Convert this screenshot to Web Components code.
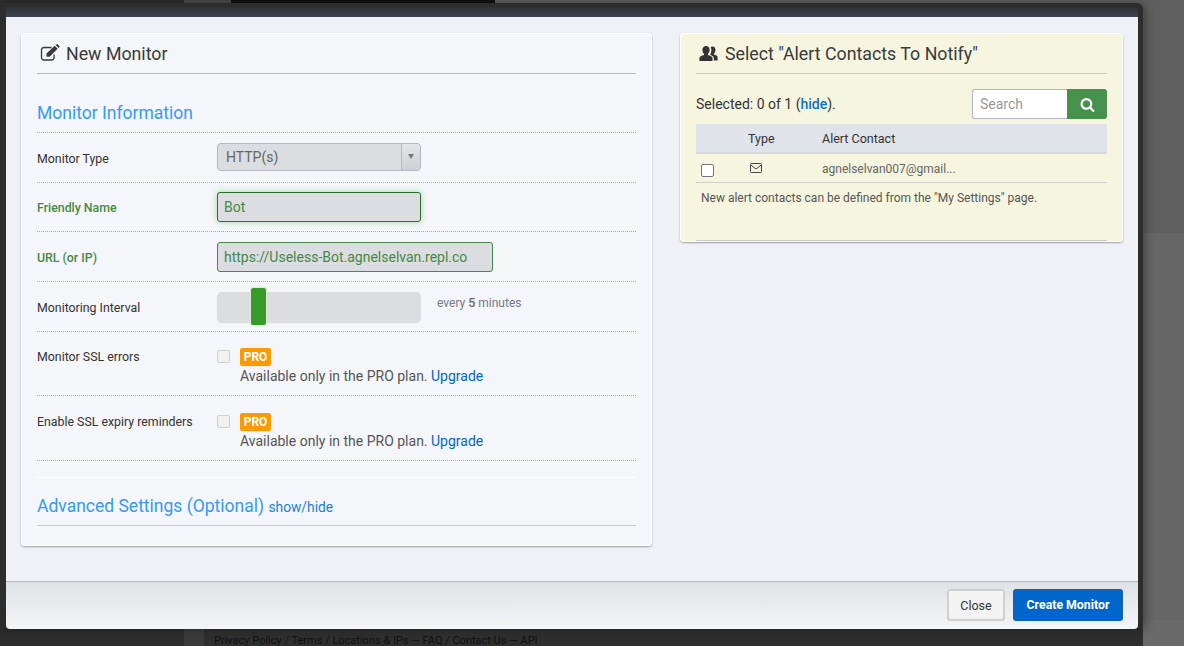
<!DOCTYPE html>
<html>
<head>
<meta charset="utf-8">
<title>New Monitor</title>
<style>
  html, body { margin: 0; height: 100%; overflow: hidden; }
  body { font-family: Roboto, "Liberation Sans", sans-serif; background: #2c2c2c; }
</style>
</head>
<body>
<up-page>
  <up-modal>
    <up-card slot="left" heading="New Monitor" icon="edit">
      <up-section-title>Monitor Information</up-section-title>
      <up-row label="Monitor Type" height="49"><up-select value="HTTP(s)"></up-select></up-row>
      <up-row label="Friendly Name" valid height="48"><up-input value="Bot" width="204" focused></up-input></up-row>
      <up-row label="URL (or IP)" valid height="49"><up-input value="https://Useless-Bot.agnelselvan.repl.co" width="276"></up-input></up-row>
      <up-row label="Monitoring Interval" height="49"><up-slider minutes="5"></up-slider></up-row>
      <up-row label="Monitor SSL errors" top="18" height="63"><up-pro-option pad="16"></up-pro-option></up-row>
      <up-row label="Enable SSL expiry reminders" top="19" height="64"><up-pro-option pad="17"></up-pro-option></up-row>
      <up-advanced></up-advanced>
    </up-card>
    <up-card slot="right" heading='Select "Alert Contacts To Notify"' icon="users" tone="cream">
      <up-contacts></up-contacts>
    </up-card>
    <up-button slot="footer">Close</up-button>
    <up-button slot="footer" primary>Create Monitor</up-button>
  </up-modal>
</up-page>

<script>
const ICONS = {
  edit: `<svg width="20" height="18" viewBox="0 0 20 18"><path d="M14 10.500v3.200a2.300 2.300 0 0 1-2.300 2.300H3.800a2.300 2.300 0 0 1-2.300-2.300V5.800a2.300 2.300 0 0 1 2.300-2.300h7.700" fill="none" stroke="#3a3a3a" stroke-width="1.300"/><path d="M6.500 9.600 14.600 1.800l3 3-8 8H6.500zM15.600 1l.8-.6a1 1 0 0 1 1.400 0l1.500 1.500a1 1 0 0 1 0 1.400l-.8.8z" fill="#3a3a3a"/></svg>`,
  users: `<svg width="19" height="16" viewBox="0 0 19 16"><path d="M7 1a3.600 3.600 0 0 1 3.600 4c0 1.700-.8 3.100-1.700 3.800v1.200c2.500.6 4.600 1.600 4.600 3v3H.4v-3c0-1.400 2.200-2.400 4.600-3V8.800C4.100 8.100 3.400 6.700 3.400 5A3.600 3.600 0 0 1 7 1z" fill="#333"/><path d="M11.500 8.700c.5-.8.900-2.300.9-3.700 0-1.100-.3-2-.8-2.800.4-.4 1-.6 1.600-.6a3.300 3.300 0 0 1 3.200 3.600c0 1.500-.7 2.800-1.500 3.400v1c2 .5 3.700 1.400 3.700 2.600V15.500h-3.800v-2.400c0-1.500-1.500-2.600-3.700-3.400z" fill="#333"/></svg>`,
  mail: `<svg width="12" height="10" viewBox="0 0 12 10"><rect x=".5" y=".5" width="11" height="9" rx="1" fill="none" stroke="#444"/><path d="M.8 2 6 6l5.200-4" fill="none" stroke="#444"/></svg>`,
  search: `<svg width="15" height="15" viewBox="0 0 1792 1792"><path fill="#fff" d="M1216 832q0-185-131.500-316.500t-316.500-131.500-316.500 131.500-131.500 316.500 131.500 316.500 316.500 131.500 316.500-131.500 131.500-316.500zm512 832q0 52-38 90t-90 38q-54 0-90-38l-343-342q-179 124-399 124-143 0-273.500-55.500t-225-150-150-225-55.500-273.500 55.500-273.500 150-225 225-150 273.500-55.500 273.500 55.500 225 150 150 225 55.500 273.500q0 220-124 399l343 343q37 37 37 90z"/></svg>`
};

// small helper so each class stays short
function define(tag, render) {
  customElements.define(tag, class extends HTMLElement {
    constructor() {
      super();
      this.attachShadow({ mode: "open" });
    }
    connectedCallback() {
      this.shadowRoot.innerHTML = render(this);
    }
  });
}

define("up-page", () => `
  <style>
    :host { display: block; position: fixed; inset: 0; overflow: hidden;
      background: #2c2c2c; font: 13px Roboto, "Liberation Sans", sans-serif; }
    .main { position: absolute; left: 184px; top: 0; right: 0; bottom: 0; background: #5f5f60; }
    .lower { position: absolute; left: 184px; top: 233px; right: 0; bottom: 0; background: #666; }
    .top { position: absolute; left: 184px; top: 0; width: 47px; height: 4px; background: #4a4a4a; }
    .hero { position: absolute; left: 231px; top: 0; width: 264px; height: 6px; background: #101010; }
    .foot { position: absolute; left: 184px; right: 0; top: 620px; bottom: 0; background: #2e2e2e; }
    .gut { position: absolute; left: 184px; width: 20px; top: 620px; bottom: 0; background: #3a3a3a; }
    .links { position: absolute; left: 214px; top: 634px; font-size: 11px; color: #111; white-space: nowrap; }
    .fr { position: absolute; left: 1143px; right: 0; top: 620px; bottom: 0; background: #6a6a6a; }
  </style>
  <div class="main"></div><div class="lower"></div><div class="top"></div><div class="hero"></div>
  <div class="foot"></div><div class="gut"></div><div class="fr"></div>
  <div class="links">Privacy Policy / Terms / Locations &amp; IPs — FAQ / Contact Us — API</div>
  <slot></slot>`);

define("up-modal", () => `
  <style>
    :host { position: absolute; left: 0; top: 3px; width: 1143px; height: 626px; box-sizing: border-box;
      display: flex; flex-direction: column; padding: 4px 5px 0 6px;
      background: #2d2d2d; border-radius: 0 6px 0 0; box-shadow: 3px 0 8px rgba(0,0,0,.3); }
    .bar { height: 10px; flex: none; background: linear-gradient(#2f3138, #41434f); border-radius: 4px 4px 0 0; }
    .body { flex: 1; min-height: 0; background: #eff1f6; display: flex; gap: 28px; padding: 16px 15px 0 15px; align-items: flex-start; }
    .foot { flex: none; border-top: 1px solid #b4b8bd; box-sizing: border-box; height: 48px;
      background: linear-gradient(#dfe2e5, #f4f5f7); display: flex; justify-content: flex-end; align-items: flex-start;
      gap: 8px; padding: 7px 15px 0 0; border-radius: 0 0 4px 4px; }
  </style>
  <div class="bar"></div>
  <div class="body"><slot name="left"></slot><slot name="right"></slot></div>
  <div class="foot"><slot name="footer"></slot></div>`);

define("up-card", el => {
  const cream = el.getAttribute("tone") === "cream";
  return `
  <style>
    :host { display: block; box-sizing: border-box; flex: none;
      width: ${cream ? 443 : 631}px; padding: 0 16px ${cream ? 1 : 20}px 16px;
      background: ${cream ? "#f5f5e0" : "#f4f6fa"}; border-radius: 4px;
      box-shadow: 0 1px 2px rgba(0,0,0,.35), 0 0 0 1px #fff inset; }
    .head { display: flex; align-items: center; gap: ${cream ? 7 : 6}px; height: 41px; box-sizing: border-box;
      border-bottom: 1px solid ${cream ? "#c9cbc6" : "#b9bab8"}; font-size: 17.800px; color: #3a3a3a; padding: 0 0 0 3px; }
    svg { display: block; }
  </style>
  <div class="head">${ICONS[el.getAttribute("icon")]}<span>${el.getAttribute("heading")}</span></div>
  <slot></slot>`;
});

define("up-section-title", () => `
  <style>
    :host { display: block; height: 59px; box-sizing: border-box; padding-top: 28px;
      font-size: 17.500px; line-height: 22px; color: #3399ff; border-bottom: 1px dotted #aaa; }
  </style><slot></slot>`);

define("up-row", el => {
  const top = el.getAttribute("top");
  const valid = el.hasAttribute("valid");
  return `
  <style>
    :host { display: flex; align-items: ${top ? "flex-start" : "center"}; box-sizing: border-box;
      height: ${+el.getAttribute("height") + 1}px; border-bottom: 1px dotted #aaa; }
    .lab { width: 180px; flex: none; font-size: 12.350px; color: ${valid ? "#468847" : "#333"};
      ${valid ? "font-weight: 500;" : ""}
      padding-top: ${top ? top : 2}px; }
  </style>
  <div class="lab">${el.getAttribute("label")}</div><slot></slot>`;
});

define("up-select", el => `
  <style>
    :host { display: flex; width: 204px; height: 28px; box-sizing: border-box; border: 1px solid #b5b6c0; border-radius: 4px;
      background: #dcdde0; color: #666; font-size: 14px; overflow: hidden; margin-top: -2px; }
    .v { flex: 1; line-height: 26px; padding-left: 8px; }
    .a { width: 18px; border-left: 1px solid #b5b6c0; background: linear-gradient(#e4e5e7, #cfd0d3);
      display: flex; align-items: center; justify-content: center; }
    i { border: 3.500px solid transparent; border-top: 5px solid #777; border-bottom: 0; }
  </style>
  <div class="v">${el.getAttribute("value")}</div><div class="a"><i></i></div>`);

define("up-input", el => {
  const focused = el.hasAttribute("focused");
  return `
  <style>
    :host { display: block; width: ${el.getAttribute("width")}px; height: 30px; box-sizing: border-box;
      border: 1px solid ${focused ? "#2f6b31" : "#468847"}; border-radius: 3px; background: #dcdde0;
      color: #468847; font-size: 14px; line-height: 28px; padding-left: 6px; white-space: nowrap;
      ${focused ? "box-shadow: 0 0 6px #a5d6a5;" : ""} }
  </style>${el.getAttribute("value")}`;
});

define("up-slider", el => `
  <style>
    :host { display: flex; align-items: center; }
    .track { width: 204px; height: 30px; background: #dcdde0; border-radius: 5px; position: relative; box-shadow: 0 1px 1px rgba(0,0,0,.12); }
    .thumb { position: absolute; left: 33px; top: -5px; width: 17px; height: 39px; box-sizing: border-box;
      background: #3a9c28; border: 1px solid #e2eadf; border-radius: 3px; }
    .txt { margin: -8px 0 0 16px; font-size: 12px; color: #77778a; }
    b { font-weight: 500; color: #666; font-size: 12.500px; }
  </style>
  <div class="track"><div class="thumb"></div></div>
  <div class="txt">every <b>${el.getAttribute("minutes")}</b> minutes</div>`);

define("up-pro-option", el => `
  <style>
    :host { display: flex; padding-top: ${el.getAttribute("pad")}px; }
    .cb { width: 13px; height: 13px; box-sizing: border-box; margin: 2px 10px 0 0; border: 1px solid #cfcfcf; border-radius: 2px; background: #f1f1f1; }
    .pro { display: block; width: 31px; background: #f90; color: #fff; font-size: 12px; font-weight: 700; line-height: 18px;
      height: 18px; text-align: center; border-radius: 2px; }
    .txt { font-size: 14px; color: #555; line-height: 20px; }
    a { color: #0066cc; text-decoration: none; }
  </style>
  <div class="cb"></div>
  <div><span class="pro">PRO</span><div class="txt">Available only in the PRO plan. <a>Upgrade</a></div></div>`);

define("up-advanced", () => `
  <style>
    :host { display: block; margin-top: 16px; border-top: 1px solid #fff; border-bottom: 1px solid #c6c8cc;
      height: 49px; box-sizing: border-box; padding-top: 17px; color: #3399ff; font-size: 17.500px; line-height: 22px; white-space: nowrap; }
    a { font-size: 13.800px; color: #1a7fd6; }
  </style>Advanced Settings (Optional) <a>show/hide</a>`);

define("up-contacts", () => `
  <style>
    :host { display: block; color: #333; height: 167px; box-sizing: border-box; border-bottom: 1px solid #c9cbc6; }
    .bar { display: flex; justify-content: space-between; align-items: center; height: 50px; box-sizing: border-box; padding-top: 10px; font-size: 14px; }
    a { color: #0a6fd0; font-weight: 500; }
    .search { display: flex; height: 30px; }
    .box { width: 95px; box-sizing: border-box; border: 1px solid #b5b5bd; border-right: 0; border-radius: 3px 0 0 3px;
      background: #fff; color: #999; line-height: 28px; padding-left: 7px; }
    .go { width: 40px; background: #46914c; border-radius: 0 3px 3px 0; display: flex; align-items: center; justify-content: center; }
    .grid { display: grid; grid-template-columns: 52px 74px 1fr; }
    .th { background: #e0e3ea; height: 30px; line-height: 30px; font-size: 12.500px; border-bottom: 2px solid #d8d9dc; box-sizing: border-box; color: #333; }
    .td { height: 29px; box-sizing: border-box; border-bottom: 1px solid #cfd0cd; font-size: 12px; color: #666; display: flex; align-items: center; padding-top: 1px; }
    .cb { width: 13px; height: 13px; box-sizing: border-box; border: 1px solid #767676; border-radius: 2px; background: #fff; margin: 4px 0 0 5px; }
    .td svg { margin: -1px 0 0 2px; }
    .note { padding: 8px 5px; font-size: 12px; color: #555; line-height: 15px; }
    svg { display: block; }
  </style>
  <div class="bar">
    <div>Selected: 0 of 1 (<a>hide</a>).</div>
    <div class="search"><div class="box">Search</div><div class="go">${ICONS.search}</div></div>
  </div>
  <div class="grid">
    <div class="th"></div><div class="th">Type</div><div class="th">Alert Contact</div>
    <div class="td"><div class="cb"></div></div><div class="td">${ICONS.mail}</div><div class="td">agnelselvan007@gmail...</div>
  </div>
  <div class="note">New alert contacts can be defined from the "My Settings" page.</div>`);

define("up-button", el => {
  const primary = el.hasAttribute("primary");
  return `
  <style>
    :host { display: block; height: 32px; box-sizing: border-box; border-radius: 3px; font-size: ${primary ? 12.3 : 12.5}px; line-height: 29px;
      text-align: center; width: ${primary ? 110 : 58}px; font-weight: ${primary ? 700 : 400};
      color: ${primary ? "#fff" : "#333"}; background: ${primary ? "#0066cc" : "#f3f3f3"};
      border: 2px solid ${primary ? "#0b62b8" : "#d0d0d0"}; }
  </style><slot></slot>`;
});
</script>
</body>
</html>
